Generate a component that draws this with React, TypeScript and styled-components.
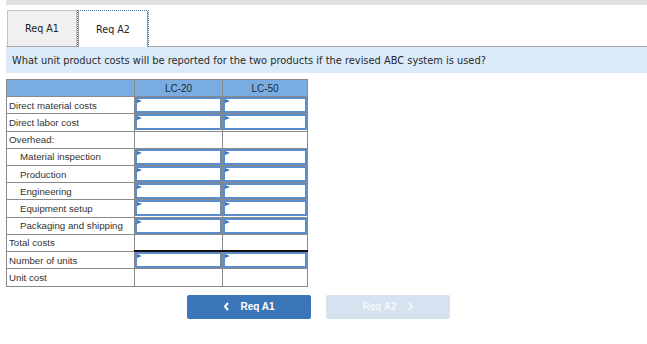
import React from 'react'
import styled, { createGlobalStyle } from 'styled-components'

const GlobalStyle = createGlobalStyle`
  body {
    margin: 0;
    background: #ffffff;
    font-family: "Liberation Sans", Arial, sans-serif;
  }
`

const Page = styled.div`
  width: 647px;
  height: 344px;
  padding-left: 6px;
  box-sizing: border-box;
`

const TopStrip = styled.div`
  height: 5px;
  background: #e1e1e1;
`

const TabRow = styled.div`
  display: flex;
  margin-top: 5px;
  padding-left: 1px;
  height: 36px;
  border-bottom: 1px solid #a8a8a8;
`

const Tab = styled.div<{ $active?: boolean }>`
  width: ${p => (p.$active ? 72 : 70)}px;
  height: ${p => (p.$active ? 37 : 36)}px;
  box-sizing: border-box;
  display: flex;
  align-items: center;
  justify-content: center;
  font-family: "DejaVu Sans", Verdana, sans-serif;
  font-size: 9.6px;
  color: #222;
  background: ${p => (p.$active ? '#ffffff' : '#f0f0f0')};
  border: 1px solid #c4c4c4;
  border-bottom: none;
  ${p =>
    p.$active &&
    `
    border: 1px dotted #4a78b0;
    border-bottom: none;
    box-shadow: inset 1px 0 0 #9a9a9a, inset -1px 0 0 #9a9a9a;
    margin-bottom: -1px;
  `}
`

const Question = styled.div`
  height: 26px;
  display: flex;
  align-items: center;
  padding-left: 6px;
  background: #daeaf8;
  font-family: "DejaVu Sans", Verdana, sans-serif;
  font-size: 9.85px;
  color: #2b2b2b;
`

const Sheet = styled.table`
  margin-top: 6px;
  width: 301px;
  table-layout: fixed;
  border-collapse: collapse;
  font-size: 9.7px;
  color: #333;
`

const Column = styled.col<{ $w: number }>`
  width: ${p => p.$w}px;
`

const HeadCell = styled.th`
  height: 16.2px;
  padding: 0;
  background: #79ade2;
  border: 1px solid #8a8a8a;
  font-weight: normal;
  font-size: 10px;
  color: #1d2a38;
  text-align: center;
`

const LabelCell = styled.td<{ $indent?: boolean }>`
  height: 16.2px;
  padding: 0 0 0 ${p => (p.$indent ? 13 : 2)}px;
  border: 1px solid #8a8a8a;
  white-space: nowrap;
`

const ValueCell = styled.td<{ $total?: boolean }>`
  padding: 0;
  border: 1px solid #8a8a8a;
  ${p => p.$total && 'border-top: 1px solid #111; border-bottom: 2px solid #111;'}
`

const Entry = styled.div`
  position: relative;
  height: 16px;
  box-sizing: border-box;
  border: 2px solid #5d8dc9;
  background: #fff;

  &::before {
    content: '';
    position: absolute;
    left: 0;
    top: 0;
    width: 0;
    height: 0;
    border-top: 2px solid transparent;
    border-bottom: 2px solid transparent;
    border-left: 5px solid #3f73b8;
  }
`

const NavBar = styled.div`
  display: flex;
  gap: 15px;
  margin: 8px 0 0 181px;
`

const NavButton = styled.div<{ $muted?: boolean }>`
  width: 124px;
  height: 24px;
  border-radius: 2px;
  display: flex;
  align-items: center;
  justify-content: center;
  gap: 10px;
  background: ${p => (p.$muted ? '#d6e2ef' : '#3a76b8')};
  color: ${p => (p.$muted ? '#f4f7fb' : '#ffffff')};
  font-weight: bold;
  font-size: 10px;
`

const Chevron = ({ dir }: { dir: 'left' | 'right' }) => (
  <svg width="7" height="9" viewBox="0 0 7 9">
    <path
      d={dir === 'left' ? 'M5 1 L2 4.5 L5 8' : 'M2 1 L5 4.5 L2 8'}
      fill="none"
      stroke="currentColor"
      strokeWidth="2"
    />
  </svg>
)

type Row = { label: string; indent?: boolean; input?: boolean; total?: boolean }

const rows: Row[] = [
  { label: 'Direct material costs', input: true },
  { label: 'Direct labor cost', input: true },
  { label: 'Overhead:' },
  { label: 'Material inspection', indent: true, input: true },
  { label: 'Production', indent: true, input: true },
  { label: 'Engineering', indent: true, input: true },
  { label: 'Equipment setup', indent: true, input: true },
  { label: 'Packaging and shipping', indent: true, input: true },
  { label: 'Total costs', total: true },
  { label: 'Number of units', input: true },
  { label: 'Unit cost' },
]

export default function App(): React.ReactElement {
  return (
    <Page>
      <GlobalStyle />
      <TopStrip />
      <TabRow>
        <Tab>Req A1</Tab>
        <Tab $active>Req A2</Tab>
      </TabRow>
      <Question>
        What unit product costs will be reported for the two products if the revised ABC system is used?
      </Question>

      <Sheet>
        <colgroup>
          <Column $w={128} />
          <Column $w={88} />
          <Column $w={85} />
        </colgroup>
        <thead>
          <tr>
            <HeadCell></HeadCell>
            <HeadCell>LC-20</HeadCell>
            <HeadCell>LC-50</HeadCell>
          </tr>
        </thead>
        <tbody>
          {rows.map(r => (
            <tr key={r.label}>
              <LabelCell $indent={r.indent}>{r.label}</LabelCell>
              {[0, 1].map(i => (
                <ValueCell key={i} $total={r.total}>
                  {r.input && <Entry />}
                </ValueCell>
              ))}
            </tr>
          ))}
        </tbody>
      </Sheet>

      <NavBar>
        <NavButton>
          <Chevron dir="left" />
          Req A1
        </NavButton>
        <NavButton $muted>
          Req A2
          <Chevron dir="right" />
        </NavButton>
      </NavBar>
    </Page>
  )
}
